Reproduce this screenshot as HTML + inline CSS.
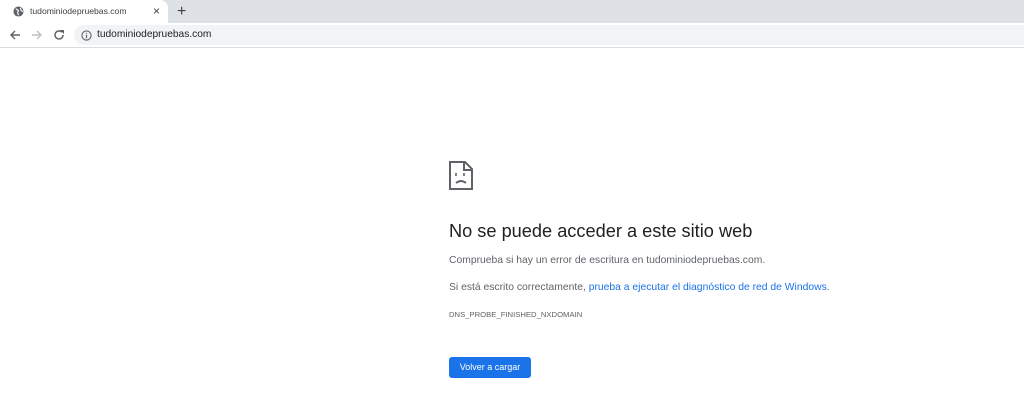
<!DOCTYPE html>
<html><head><style>
body{margin:0;width:1024px;height:402px;background:#fff;font-family:"Liberation Sans",sans-serif;position:relative;overflow:hidden}
.tabbar{position:absolute;left:0;top:0;width:1024px;height:23px;background:#dee1e6}
.tab{position:absolute;left:0;top:0;width:168px;height:23px;background:#fff;border-radius:0 8px 0 0}
.toolbar{position:absolute;left:0;top:23px;width:1024px;height:24px;background:#fff;border-bottom:1px solid #dadce0}
.omni{position:absolute;left:74px;top:2px;width:960px;height:20px;background:#f1f3f4;border-radius:10px}
.t{position:absolute;white-space:nowrap}
</style></head><body>
<div class="tabbar"><div class="tab"></div></div>
<svg class="t" style="left:13px;top:6px" width="11" height="11" viewBox="0 0 12 12"><circle cx="6" cy="6" r="5.5" fill="#5f6368"/><path d="M3 3l3 2-1 2 1 3M8 2l1 3 2 1" stroke="#fff" stroke-width="1.2" fill="none"/></svg>
<div class="t" style="left:30px;top:6px;font-size:8.6px;color:#3c4043">tudominiodepruebas.com</div>
<div class="t" style="left:153px;top:4px;font-size:12px;color:#3c4043">×</div>
<div class="t" style="left:177px;top:3px;font-size:16px;color:#3c4043">+</div>
<div class="toolbar"><div class="omni"></div></div>
<svg class="t" style="left:9px;top:29px" width="12" height="12" viewBox="0 0 12 12"><path d="M11 6H2M6 2L2 6l4 4" stroke="#5f6368" stroke-width="1.4" fill="none"/></svg>
<svg class="t" style="left:31px;top:29px" width="12" height="12" viewBox="0 0 12 12"><path d="M1 6h9M6 2l4 4-4 4" stroke="#bdc1c6" stroke-width="1.4" fill="none"/></svg>
<svg class="t" style="left:53px;top:29px" width="12" height="12" viewBox="0 0 12 12"><path d="M10 6a4 4 0 1 1-1.2-2.9" stroke="#5f6368" stroke-width="1.5" fill="none"/><path d="M7 1h4v4z" fill="#5f6368"/></svg>
<svg class="t" style="left:81px;top:30px" width="11" height="11" viewBox="0 0 12 12"><circle cx="6" cy="6" r="5" stroke="#5f6368" stroke-width="1.2" fill="none"/><path d="M6 5v4M6 3v1" stroke="#5f6368" stroke-width="1.3"/></svg>
<div class="t" style="left:97px;top:29px;font-size:10.2px;color:#202124">tudominiodepruebas.com</div>
<svg class="t" style="left:449px;top:161px" width="24" height="29" viewBox="0 0 24 29"><path d="M1 1h15l7 7v20H1z" stroke="#5f6368" stroke-width="2" fill="none"/><path d="M15 1v8h8" stroke="#5f6368" stroke-width="2" fill="none"/><path d="M7 12v3M15 12v3" stroke="#5f6368" stroke-width="1.6"/><path d="M7 22q5-4 10 0" stroke="#5f6368" stroke-width="2" fill="none"/></svg>
<div class="t" style="left:449px;top:221px;font-size:18.2px;color:#202124">No se puede acceder a este sitio web</div>
<div class="t" style="left:449px;top:255px;font-size:10.35px;color:#5f6368">Comprueba si hay un error de escritura en tudominiodepruebas.com.</div>
<div class="t" style="left:449px;top:282px;font-size:10.35px;color:#5f6368">Si está escrito correctamente, <span style="color:#1a73e8">prueba a ejecutar el diagnóstico de red de Windows</span>.</div>
<div class="t" style="left:449px;top:310px;font-size:7.7px;color:#5f6368">DNS_PROBE_FINISHED_NXDOMAIN</div>
<div class="t" style="left:449px;top:357px;width:82px;height:21px;background:#1a73e8;border-radius:3px;color:#fff;font-size:9px;line-height:21px;text-align:center">Volver a cargar</div>
</body></html>
